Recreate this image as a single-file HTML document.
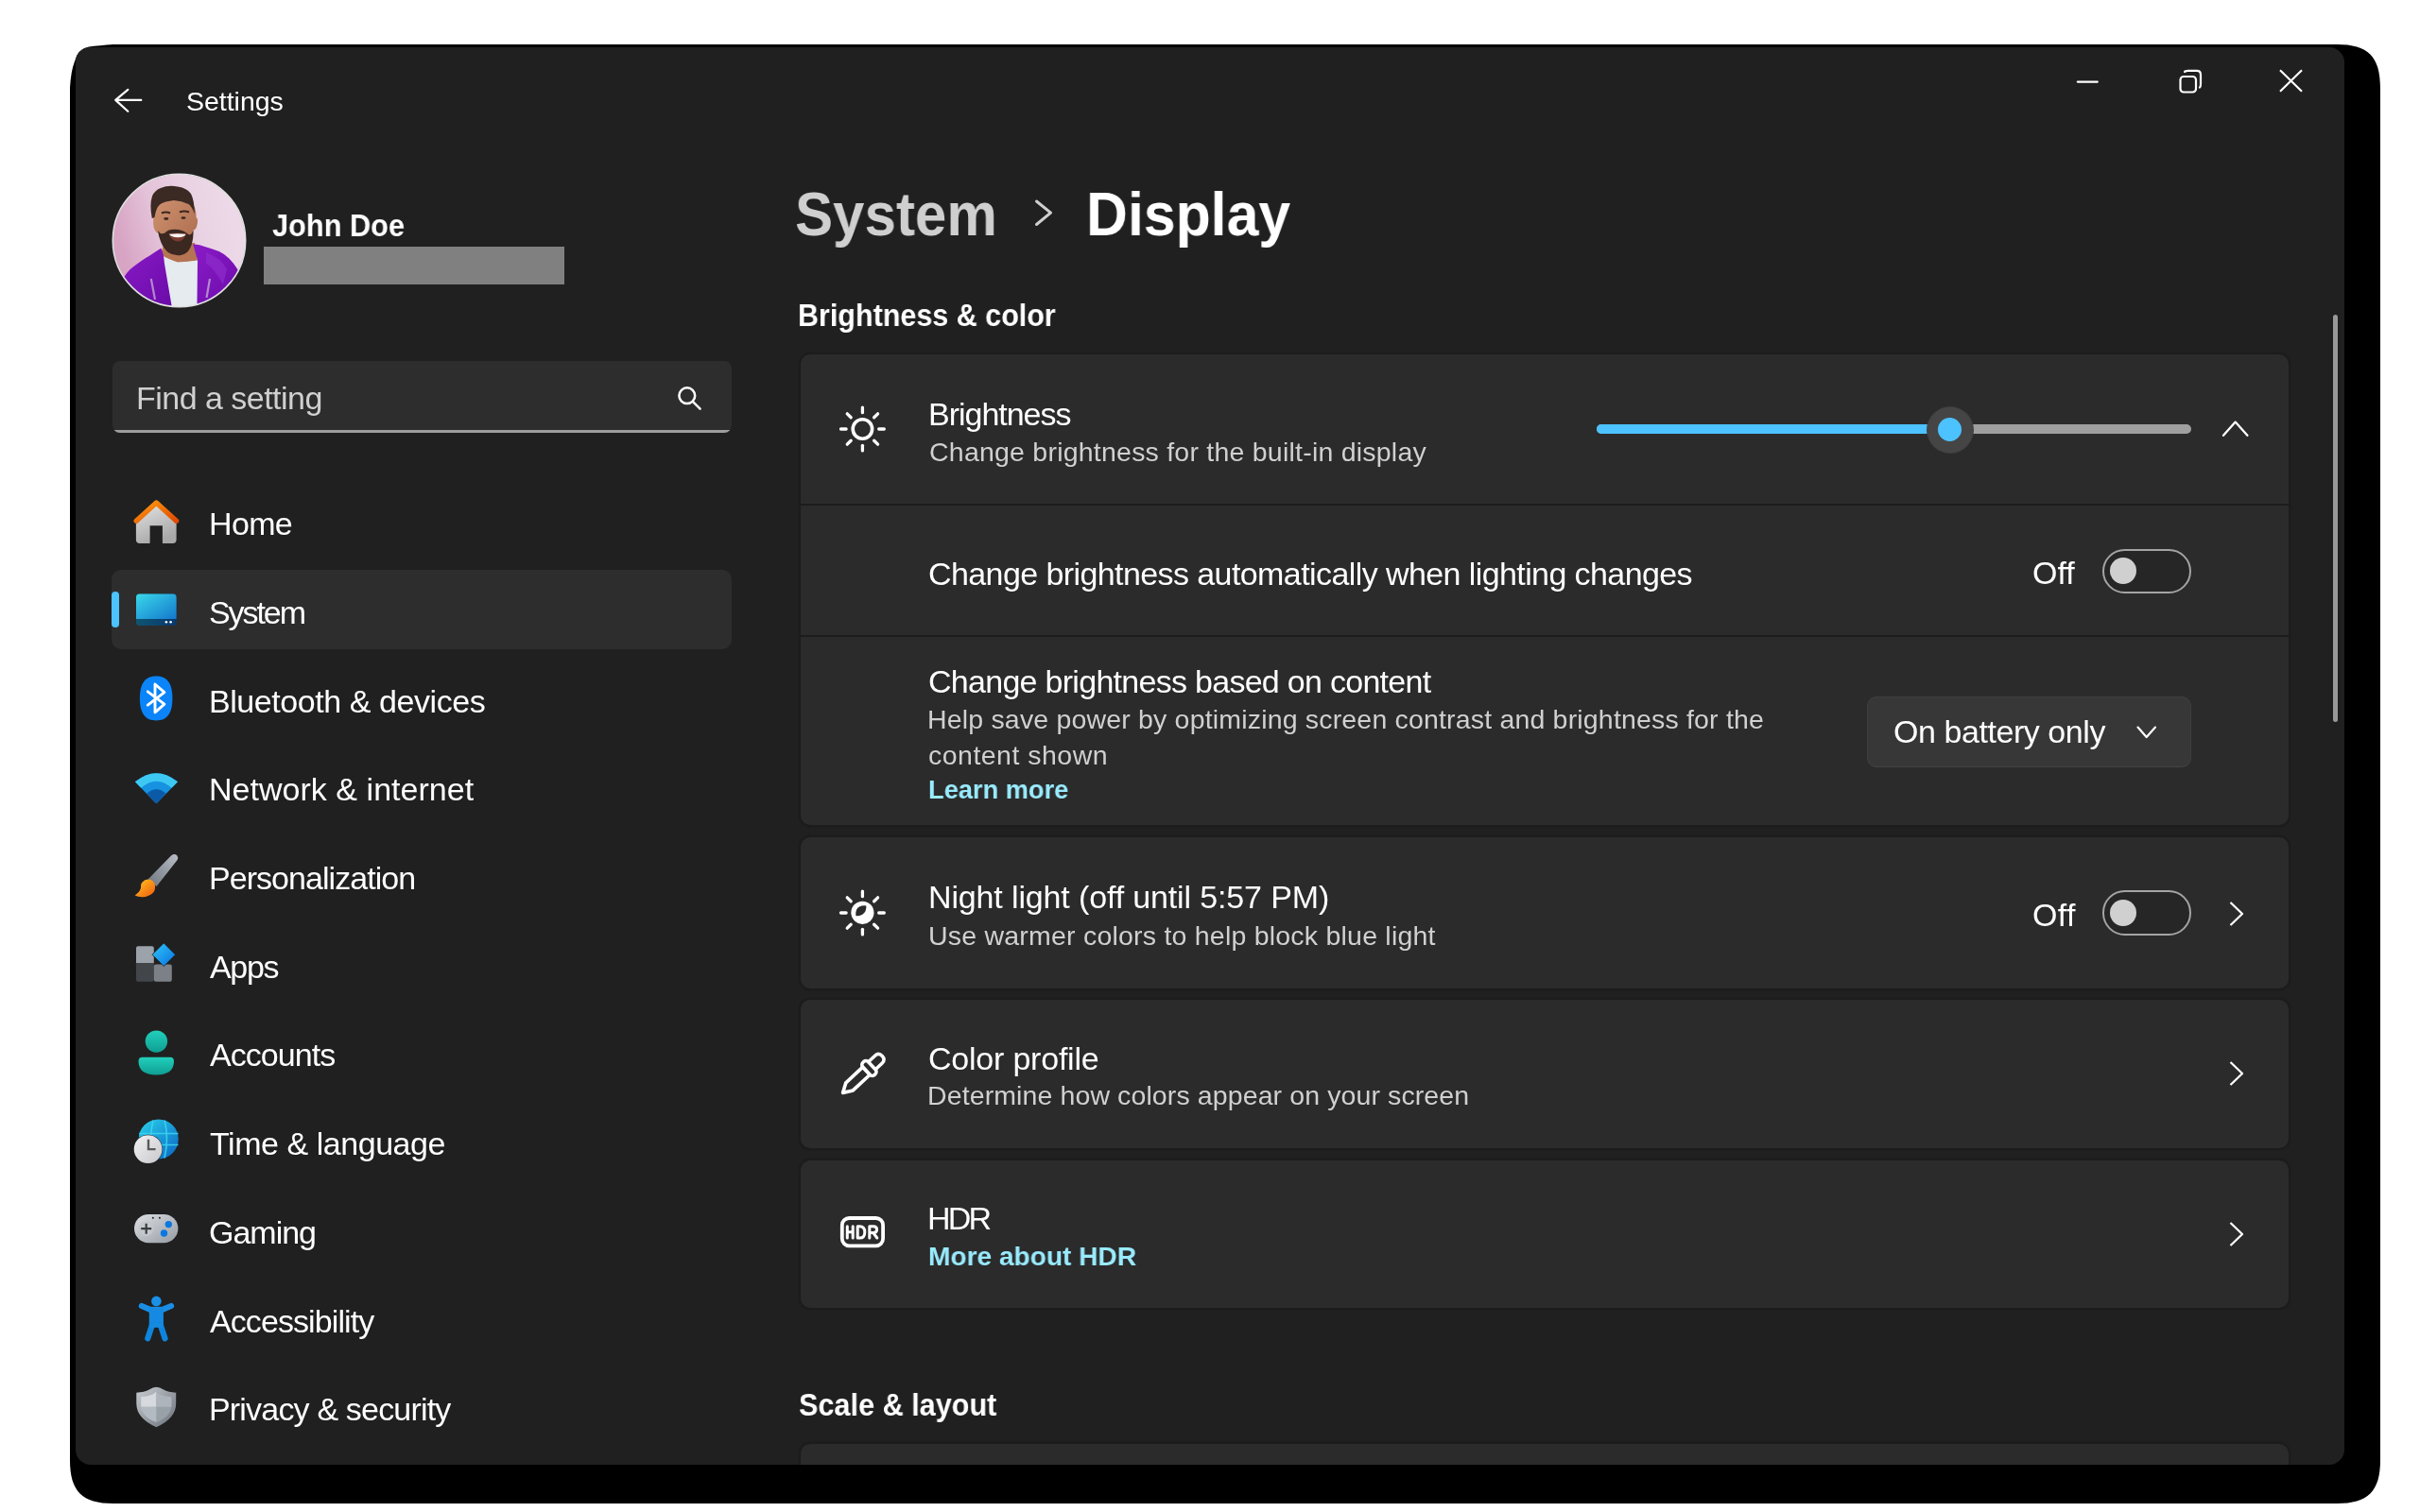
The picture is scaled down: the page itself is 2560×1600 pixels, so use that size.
<!DOCTYPE html><html><head><meta charset="utf-8"><title>Settings</title><style>
html,body{margin:0;padding:0;width:2560px;height:1600px;overflow:hidden;background:#ffffff}
.t{position:absolute;white-space:nowrap;line-height:1;font-family:"Liberation Sans",sans-serif;will-change:transform}
.abs{position:absolute}
</style></head><body>
<svg class="abs" style="left:0;top:0" width="2560" height="1600"><path d="M74 1545 L74 93 Q75 75 79 65 Q82 52 94 49.5 Q105 48 120 47 L2472 47 C2505.1 47 2518 59.9 2518 93 L2518 1545 C2518 1578.1 2505.1 1591 2472 1591 L120 1591 C86.9 1591 74 1578.1 74 1545 Z" fill="#000"/></svg>
<div class="abs" style="left:80px;top:50px;width:2400px;height:1500px;border-radius:15px 16px 16px 16px;background:#202020;overflow:hidden">
<div class="abs" style="left:-80px;top:-50px;width:2560px;height:1600px">
<svg class="abs" style="left:118px;top:183px" width="143" height="143" viewBox="0 0 143 143">
<defs><clipPath id="av"><circle cx="71.5" cy="71.5" r="70"/></clipPath>
<linearGradient id="avbg" x1="0" y1="0.3" x2="1" y2="0"><stop offset="0" stop-color="#d8a4c4"/><stop offset="0.28" stop-color="#e3c2d8"/><stop offset="0.6" stop-color="#ead4e4"/><stop offset="1" stop-color="#eedce9"/></linearGradient>
<linearGradient id="skin" x1="0" y1="0" x2="1" y2="1"><stop offset="0" stop-color="#cf9270"/><stop offset="1" stop-color="#a8694a"/></linearGradient>
<linearGradient id="hood" x1="0" y1="0" x2="1" y2="1"><stop offset="0" stop-color="#8a1cc8"/><stop offset="1" stop-color="#6a0aa8"/></linearGradient></defs>
<g clip-path="url(#av)">
<rect width="143" height="143" fill="url(#avbg)"/>
<path d="M55 76 L88 74 L91 93 L70 95 L52 87 Z" fill="#b57452"/>
<path d="M51.3 86 Q60 92 70.3 94.6 Q82 94 91 92.5 L91 143 H62 Z" fill="#e5ebef"/>
<path d="M10 116 Q16 104 23.7 98.8 Q34 91 39.6 88 Q47 83 52.3 79.8 Q55 84 56 96 L64 143 H4 Z" fill="url(#hood)"/>
<path d="M86.2 75.5 Q94 76 97.8 77.7 Q106 80 113.7 83 Q120 86 124.3 90.4 Q130 96 134 103 L140 143 H90.4 L91 92.5 Z" fill="url(#hood)"/>
<path d="M100 84 Q116 90 122 102 L118 118 Q108 100 100 96 Z" fill="#8e2ccc" opacity="0.7"/>
<path d="M41.8 112 L46 134 M104 112 L100.5 132" stroke="#c4a6d8" stroke-width="2.2" opacity="0.8"/>
<path d="M45 43.8 Q46 30 58 28 Q72 26 84 31 Q90 36 89.5 47 Q92 48 90.5 55 Q89.5 60 86.5 60.5 Q86 74 80 82 Q73 88 64 85 Q53 80 50 64 Q46 63 44.5 57 Q43.5 50 45 43.8 Z" fill="url(#skin)"/>
<path d="M49 60.7 Q51 76 59.7 84 Q66 88 72.4 87.2 Q80 86 83 79.8 Q87 72 86.4 60.5 Q84 68 80 64 Q74 59.5 66 59.8 Q59 60 56.5 63.5 Q52 66 49 60.7 Z" fill="#3a2821"/>
<path d="M60.5 64.5 Q70 62.5 79 64.5 Q76 72.5 70 72.5 Q63 72 60.5 64.5 Z" fill="#7a3a30"/>
<path d="M61 64.8 Q70 63.5 78.6 64.8 Q77.5 68 70 68.3 Q63 68 61 64.8 Z" fill="#f6f2ef"/>
<path d="M42.8 48 Q40 34 43 24.5 Q46 18 52 16 Q60 12.5 70 14.5 Q80 16 84 22 Q88 30 87.8 43.8 Q86 37 82 33.2 Q74 29.5 66 29 Q56 30 51.3 33.2 Q47 37 45.5 47 Z" fill="#3b2923"/>
<path d="M53 42.5 Q57.5 40.5 62 42.5 M72 41.5 Q77 39.5 82 41.5" stroke="#3b2620" stroke-width="2.2" fill="none"/>
<ellipse cx="57.8" cy="48.5" rx="2.6" ry="1.4" fill="#3e2a24"/><ellipse cx="76" cy="47.6" rx="2.6" ry="1.4" fill="#3e2a24"/>
</g>
<circle cx="71.5" cy="71.5" r="70.2" fill="none" stroke="#e0e0e0" stroke-width="1.6"/>
</svg>
<div class="abs" style="left:279px;top:261px;width:318px;height:40px;background:#808080"></div>
<div class="abs" style="left:118.5px;top:382px;width:655px;height:76px;border-radius:8px;background:#2d2d2d;overflow:hidden"><div class="abs" style="left:0;bottom:0;width:655px;height:3px;background:#9e9e9e"></div></div>
<div class="abs" style="left:118px;top:603px;width:656px;height:84px;border-radius:10px;background:#2d2d2d"></div>
<div class="abs" style="left:118px;top:626px;width:8px;height:38px;border-radius:4px;background:#4cc2ff"></div>
<div class="abs" style="left:846.5px;top:375px;width:1574.5px;height:498px;border-radius:10px;background:#2b2b2b;box-shadow:0 0 0 2.5px #1c1c1c"></div>
<div class="abs" style="left:846.5px;top:532.5px;width:1574.5px;height:2.5px;background:#1c1c1c"></div>
<div class="abs" style="left:846.5px;top:671.5px;width:1574.5px;height:2.5px;background:#1c1c1c"></div>
<div class="abs" style="left:846.5px;top:886px;width:1574.5px;height:159.5px;border-radius:10px;background:#2b2b2b;box-shadow:0 0 0 2.5px #1c1c1c"></div>
<div class="abs" style="left:846.5px;top:1058px;width:1574.5px;height:156.5px;border-radius:10px;background:#2b2b2b;box-shadow:0 0 0 2.5px #1c1c1c"></div>
<div class="abs" style="left:846.5px;top:1227.5px;width:1574.5px;height:156.5px;border-radius:10px;background:#2b2b2b;box-shadow:0 0 0 2.5px #1c1c1c"></div>
<div class="abs" style="left:846.5px;top:1528px;width:1574.5px;height:200px;border-radius:10px;background:#2b2b2b;box-shadow:0 0 0 2.5px #1c1c1c"></div>
<div class="abs" style="left:1689px;top:449px;width:629px;height:10px;border-radius:5px;background:#9f9f9f"></div>
<div class="abs" style="left:1689px;top:449px;width:380px;height:10px;border-radius:5px;background:#4cc2ff"></div>
<div class="abs" style="left:2038.5px;top:430.5px;width:48px;height:48px;border-radius:50%;background:#454545;box-shadow:0 0 0 1px #3e3e3e"></div>
<div class="abs" style="left:2050.1px;top:442.1px;width:25px;height:25px;border-radius:50%;background:#4cc2ff"></div>
<div class="abs" style="left:2224px;top:580.5px;width:94px;height:47.5px;box-sizing:border-box;border-radius:23.75px;border:2.8px solid #a4a4a4;background:#262626"></div>
<div class="abs" style="left:2231.6px;top:590.25px;width:28px;height:28px;border-radius:50%;background:#d0d0d0"></div>
<div class="abs" style="left:2224px;top:942px;width:94px;height:47.5px;box-sizing:border-box;border-radius:23.75px;border:2.8px solid #a4a4a4;background:#262626"></div>
<div class="abs" style="left:2231.6px;top:951.75px;width:28px;height:28px;border-radius:50%;background:#d0d0d0"></div>
<div class="abs" style="left:1975px;top:737px;width:342.5px;height:74.5px;box-sizing:border-box;border-radius:10px;background:#373737;border:1px solid #3f3f3f;border-bottom-color:#444"></div>
<div class="abs" style="left:2468px;top:332.5px;width:5px;height:431.5px;border-radius:2.5px;background:#999"></div>
<svg class="abs" style="left:1085px;top:205px" width="40" height="40"><path d="M11.5 8 L26.5 20.2 L11.5 32.5" stroke="#cfcfcf" stroke-width="3" fill="none" stroke-linecap="round" stroke-linejoin="round"/></svg>
<svg class="abs" style="left:2345px;top:440px" width="40" height="28"><path d="M7 20.8 L19.7 6.6 L32.4 20.8" stroke="#fff" stroke-width="2.3" fill="none" stroke-linecap="round" stroke-linejoin="round"/></svg>
<svg class="abs" style="left:2255px;top:762px" width="32" height="26"><path d="M6.5 7.6 L15.7 18 L25 7.6" stroke="#fff" stroke-width="2.2" fill="none" stroke-linecap="round" stroke-linejoin="round"/></svg>
<svg class="abs" style="left:2350px;top:948.5px" width="32" height="36"><path d="M9.5 6 L22 18 L9.5 30" stroke="#fff" stroke-width="2.3" fill="none" stroke-linejoin="round"/></svg>
<svg class="abs" style="left:2350px;top:1118px" width="32" height="36"><path d="M9.5 6 L22 18 L9.5 30" stroke="#fff" stroke-width="2.3" fill="none" stroke-linejoin="round"/></svg>
<svg class="abs" style="left:2350px;top:1287.7px" width="32" height="36"><path d="M9.5 6 L22 18 L9.5 30" stroke="#fff" stroke-width="2.3" fill="none" stroke-linejoin="round"/></svg>
<svg style="position:absolute;left:110px;top:84px" width="50" height="44" viewBox="0 0 50 44"><path d="M12.2 21.9 H39.3 M12.2 21.9 L25.3 10.8 M12.2 21.9 L25.3 33.8" stroke="#fff" stroke-width="2.2" fill="none" stroke-linecap="round" stroke-linejoin="round"/></svg>
<svg style="position:absolute;left:2180px;top:60px" width="280" height="50" viewBox="0 0 280 50"><path d="M17.8 26.6 H38.8" stroke="#fff" stroke-width="2.2" stroke-linecap="round"/><rect x="126.5" y="21" width="16.5" height="16.5" rx="3.5" stroke="#fff" stroke-width="2.2" fill="none"/><path d="M131 16 Q131.5 14.9 134.5 14.9 H144 Q148 14.9 148 19 V29 Q148 32 147 32.5" stroke="#fff" stroke-width="2.2" fill="none" stroke-linecap="round"/><path d="M232 14.2 L255 36.7 M255 14.2 L232 36.7" stroke="#fff" stroke-width="2.2"/></svg>
<svg style="position:absolute;left:705px;top:400px" width="50" height="45" viewBox="0 0 50 45"><circle cx="21.8" cy="18.7" r="8.4" stroke="#fff" stroke-width="2.5" fill="none"/><path d="M27.8 24.8 L35.6 32.6" stroke="#fff" stroke-width="2.5" stroke-linecap="round"/></svg>
<svg style="position:absolute;left:0;top:0" width="0" height="0"><defs>
<linearGradient id="gHome" x1="0" y1="0" x2="0.4" y2="1"><stop offset="0" stop-color="#e6e6e6"/><stop offset="1" stop-color="#a9a9a9"/></linearGradient>
<linearGradient id="gRoof" x1="0" y1="0" x2="1" y2="1"><stop offset="0" stop-color="#ff9a10"/><stop offset="1" stop-color="#e04a00"/></linearGradient>
<linearGradient id="gSys" x1="0" y1="0" x2="1" y2="1"><stop offset="0" stop-color="#3ad8ea"/><stop offset="1" stop-color="#1478cc"/></linearGradient>
<linearGradient id="gSysB" x1="0" y1="0" x2="1" y2="0"><stop offset="0" stop-color="#0f5570"/><stop offset="1" stop-color="#083870"/></linearGradient>
<linearGradient id="gWifi1" x1="0" y1="0" x2="0" y2="1"><stop offset="0" stop-color="#45d4fa"/><stop offset="1" stop-color="#36c6f2"/></linearGradient>
<linearGradient id="gBrushH" x1="1" y1="0" x2="0" y2="1"><stop offset="0" stop-color="#b8bec6"/><stop offset="1" stop-color="#6e757e"/></linearGradient>
<linearGradient id="gBrushT" x1="0" y1="0" x2="1" y2="1"><stop offset="0" stop-color="#ffc820"/><stop offset="1" stop-color="#f05a10"/></linearGradient>
<linearGradient id="gDia" x1="0" y1="0" x2="1" y2="1"><stop offset="0" stop-color="#30c8fa"/><stop offset="1" stop-color="#0a70e0"/></linearGradient>
<linearGradient id="gTeal" x1="0" y1="0" x2="0" y2="1"><stop offset="0" stop-color="#22d0bc"/><stop offset="1" stop-color="#0e9e92"/></linearGradient>
<linearGradient id="gGlobe" x1="0" y1="0" x2="1" y2="1"><stop offset="0" stop-color="#2ad2ea"/><stop offset="1" stop-color="#0a64c4"/></linearGradient>
<linearGradient id="gClock" x1="0" y1="0" x2="1" y2="1"><stop offset="0" stop-color="#f2f2f4"/><stop offset="1" stop-color="#c8c8cc"/></linearGradient>
<linearGradient id="gPad" x1="0" y1="0" x2="1" y2="1"><stop offset="0" stop-color="#dde0e4"/><stop offset="1" stop-color="#959ba3"/></linearGradient>
<linearGradient id="gAcc" x1="0" y1="0" x2="0" y2="1"><stop offset="0" stop-color="#1c9ae8"/><stop offset="1" stop-color="#0a78d8"/></linearGradient>
<linearGradient id="gShield" x1="0" y1="0" x2="1" y2="1"><stop offset="0" stop-color="#c8ccd2"/><stop offset="1" stop-color="#6c727a"/></linearGradient>
</defs></svg>
<svg style="position:absolute;left:136px;top:520px" width="60" height="60" viewBox="0 0 60 60"><path d="M7.9 31 L29.4 12 L50.6 31 V51 Q50.6 55 46.6 55 H35.9 V36.3 H22.6 V55 H11.9 Q7.9 55 7.9 51 Z" fill="url(#gHome)"/><path d="M8.2 31.3 L29.4 12 L50.6 31.3" stroke="url(#gRoof)" stroke-width="5.4" fill="none" stroke-linecap="round" stroke-linejoin="round"/></svg>
<svg style="position:absolute;left:136px;top:615px" width="60" height="60" viewBox="0 0 60 60"><rect x="8" y="13.5" width="42.6" height="33.5" rx="3.5" fill="url(#gSysB)"/><path d="M8 17 Q8 13.5 11.5 13.5 H47.1 Q50.6 13.5 50.6 17 V39.9 H8 Z" fill="url(#gSys)"/><circle cx="39.9" cy="43.3" r="1.3" fill="#fff"/><circle cx="44.6" cy="43.3" r="1.3" fill="#fff"/></svg>
<svg style="position:absolute;left:136px;top:708px" width="60" height="60" viewBox="0 0 60 60"><path d="M29.2 7.5 C40 7.5 46.4 14 46.4 31 C46.4 48 40 54.4 29.2 54.4 C18.4 54.4 11.9 48 11.9 31 C11.9 14 18.4 7.5 29.2 7.5 Z" fill="#0a84f8"/><path d="M20.3 23.8 L37.9 37.2 L28 45.8 V16 L37.9 24.6 L20.3 38.2" stroke="#fff" stroke-width="2.9" fill="none" stroke-linecap="round" stroke-linejoin="round"/></svg>
<svg style="position:absolute;left:136px;top:805px" width="60" height="60" viewBox="0 0 60 60"><path d="M6.9 22.3 Q29.4 4 52 22.3 L30.6 44.2 Q29.4 45.4 28.2 44.2 Z" fill="#1792e0"/><path d="M6.9 22.3 Q29.4 4 52 22.3 L45.6 28.8 Q29.4 14.5 13.2 28.8 Z" fill="#3cc8f2"/><path d="M19.3 34.6 Q29.4 25.8 39.5 34.6 L30.6 44.2 Q29.4 45.4 28.2 44.2 Z" fill="#0b5aa8"/></svg>
<svg style="position:absolute;left:136px;top:898px" width="60" height="60" viewBox="0 0 60 60"><path d="M20.6 32.5 L45 7.5 Q48.5 4.6 51.4 7.4 Q53.2 10 51.6 12 L29.6 40 Z" fill="url(#gBrushH)"/><path d="M14.3 35.7 Q17 32.5 20.6 32.5 Q25 32.5 27.2 36 Q29 40 27.4 44.8 Q25 49 18 51 Q11 52 6.7 49.6 Q9.5 47.5 11.5 45 Q13.5 42 13.1 38.5 Q13.3 36.8 14.3 35.7 Z" fill="url(#gBrushT)"/></svg>
<svg style="position:absolute;left:136px;top:990px" width="60" height="60" viewBox="0 0 60 60"><rect x="8" y="11.3" width="18.8" height="19" rx="2" fill="#9ca2aa"/><rect x="8" y="29.8" width="18.8" height="19" rx="2" fill="#42464a"/><rect x="26.8" y="30.5" width="19" height="18.3" rx="2" fill="#7c8188"/><rect x="7.8" y="29" width="19.2" height="2" fill="#42464a"/><path d="M37.3 7.9 L49.6 20.2 L37.3 32.5 L25 20.2 Z" fill="url(#gDia)" stroke="#1b1b1b" stroke-width="0.8" stroke-linejoin="round"/></svg>
<svg style="position:absolute;left:136px;top:1085px" width="60" height="60" viewBox="0 0 60 60"><circle cx="29.4" cy="17.1" r="11.7" fill="url(#gTeal)"/><path d="M14.5 33.7 H44 Q48 33.7 48 38 Q48 52.4 29.3 52.4 Q10.5 52.4 10.5 38 Q10.5 33.7 14.5 33.7 Z" fill="url(#gTeal)"/></svg>
<svg style="position:absolute;left:136px;top:1178px" width="60" height="60" viewBox="0 0 60 60"><circle cx="31.7" cy="27.4" r="21" fill="url(#gGlobe)"/><g stroke="#3ad4f0" stroke-width="1.6" fill="none" opacity="0.9"><path d="M11 21.5 H52.5 M11 33.5 H52.5"/><path d="M26 7.5 Q21 27 26 47.5 M38 7.5 Q43 27 38 47.5"/></g><circle cx="20.6" cy="38.1" r="15.4" fill="#1e1e1e"/><circle cx="20.6" cy="38.1" r="14.9" fill="url(#gClock)"/><path d="M21 27.8 V38.1 H28.6" stroke="#5a5a5a" stroke-width="2.4" fill="none"/></svg>
<svg style="position:absolute;left:136px;top:1272px" width="60" height="60" viewBox="0 0 60 60"><rect x="6" y="12.9" width="46.4" height="30.4" rx="15.2" fill="url(#gPad)"/><circle cx="18.7" cy="28.2" r="7.8" fill="#c4c8cd"/><path d="M13.2 28.2 H24.2 M18.7 22.7 V33.7" stroke="#3a3e42" stroke-width="2.2"/><circle cx="42.3" cy="23.6" r="3.7" fill="#0a78e0"/><circle cx="37.5" cy="33" r="3.7" fill="#0a78e0"/><circle cx="25.8" cy="16.7" r="1" fill="#222"/><circle cx="32.9" cy="16.7" r="1" fill="#222"/></svg>
<svg style="position:absolute;left:136px;top:1366px" width="60" height="60" viewBox="0 0 60 60"><circle cx="29.4" cy="10.9" r="5.3" fill="#1a90e6"/><path d="M13.9 16 L23 19.8 H35.8 L45 16" stroke="#1a8ee4" stroke-width="6.2" fill="none" stroke-linecap="round" stroke-linejoin="round"/><rect x="21.8" y="18" width="15.1" height="20" fill="#168ae2"/><path d="M25 36 L20.3 50.2 M33.8 36 L38.5 50.2" stroke="#0f84dc" stroke-width="6.2" fill="none" stroke-linecap="round"/><path d="M21.8 34 H36.9 L35 40 Q29.4 37.5 23.8 40 Z" fill="#148ae0"/></svg>
<svg style="position:absolute;left:136px;top:1459px" width="60" height="60" viewBox="0 0 60 60"><path d="M29.4 8.7 Q33 8.7 37 11.5 Q42 14.3 50.2 14.7 V26 Q50.2 42 29.4 51.2 Q8.3 42 8.3 26 V14.7 Q16.8 14.3 21.8 11.5 Q25.8 8.7 29.4 8.7 Z" fill="url(#gShield)"/><path d="M29.4 13.5 Q33 18 45.3 19.3 V29.5 Q44 41 29.4 46 Z" fill="#98a0a8"/><path d="M29.4 13.5 Q25.5 18 13.2 19.3 V29.8 H29.4 Z" fill="#d6dade"/><path d="M13.2 29.8 Q14.5 41 29.4 46 V29.8 Z" fill="#b4bac2"/><path d="M29.4 13.5 Q33 18 45.3 19.3 V29.8 H29.4 Z" fill="#aeb4bc"/></svg>
<svg style="position:absolute;left:882px;top:424px" width="60" height="60" viewBox="0 0 60 60"><path d="M30.40 12.70 L30.40 7.10" stroke="#fff" stroke-width="3.3" stroke-linecap="round"/><path d="M42.63 17.77 L46.59 13.81" stroke="#fff" stroke-width="3.3" stroke-linecap="round"/><path d="M47.70 30.00 L53.30 30.00" stroke="#fff" stroke-width="3.3" stroke-linecap="round"/><path d="M42.63 42.23 L46.59 46.19" stroke="#fff" stroke-width="3.3" stroke-linecap="round"/><path d="M30.40 47.30 L30.40 52.90" stroke="#fff" stroke-width="3.3" stroke-linecap="round"/><path d="M18.17 42.23 L14.21 46.19" stroke="#fff" stroke-width="3.3" stroke-linecap="round"/><path d="M13.10 30.00 L7.50 30.00" stroke="#fff" stroke-width="3.3" stroke-linecap="round"/><path d="M18.17 17.77 L14.21 13.81" stroke="#fff" stroke-width="3.3" stroke-linecap="round"/><circle cx="30.4" cy="30" r="10.2" stroke="#fff" stroke-width="3.6" fill="none"/></svg>
<svg style="position:absolute;left:882px;top:936px" width="60" height="60" viewBox="0 0 60 60"><path d="M30.40 12.70 L30.40 7.10" stroke="#fff" stroke-width="3.3" stroke-linecap="round"/><path d="M42.63 17.77 L46.59 13.81" stroke="#fff" stroke-width="3.3" stroke-linecap="round"/><path d="M47.70 30.00 L53.30 30.00" stroke="#fff" stroke-width="3.3" stroke-linecap="round"/><path d="M42.63 42.23 L46.59 46.19" stroke="#fff" stroke-width="3.3" stroke-linecap="round"/><path d="M30.40 47.30 L30.40 52.90" stroke="#fff" stroke-width="3.3" stroke-linecap="round"/><path d="M18.17 42.23 L14.21 46.19" stroke="#fff" stroke-width="3.3" stroke-linecap="round"/><path d="M13.10 30.00 L7.50 30.00" stroke="#fff" stroke-width="3.3" stroke-linecap="round"/><path d="M18.17 17.77 L14.21 13.81" stroke="#fff" stroke-width="3.3" stroke-linecap="round"/><circle cx="30.4" cy="29.8" r="12.1" fill="#fff"/><path d="M23.4 33 Q22.5 26 27 23.5 Q30 22 34.3 22.4 Q35 28 30.5 31.5 Q27 34 23.4 33 Z" fill="#2b2b2b"/></svg>
<svg style="position:absolute;left:882px;top:1105px" width="60" height="60" viewBox="0 0 60 60"><g transform="translate(8.5 52.4) rotate(-43)" stroke="#fff" stroke-width="3.6" fill="none" stroke-linejoin="round"><path d="M1.5 0 L11 -5.5 H35.5 V5.5 H11 Z"/><rect x="35.5" y="-9" width="8" height="18" rx="3.5"/><path d="M43.5 -5.5 H53 Q58.5 -5.5 58.5 0 Q58.5 5.5 53 5.5 H43.5"/></g></svg>
<svg style="position:absolute;left:882px;top:1274px" width="60" height="60" viewBox="0 0 60 60"><rect x="8.8" y="15" width="43.3" height="29.3" rx="7.5" stroke="#fff" stroke-width="3.8" fill="none"/><g stroke="#fff" stroke-width="3" fill="none" stroke-linecap="round" stroke-linejoin="round"><path d="M14.3 23.8 V36 M20.2 23.8 V36 M14.3 29.8 H20.2"/><path d="M25.2 23.8 V36 H27.3 Q32.8 36 32.8 29.9 Q32.8 23.8 27.3 23.8 Z"/><path d="M37.8 36 V23.8 H41.8 Q45.6 23.8 45.6 27.3 Q45.6 30.6 41.8 30.6 H37.8 M41.8 30.6 L45.8 36"/></g></svg>
<div class="t" style="left:197.00px;top:93.46px;font-size:28.5px;font-weight:400;color:#ffffff;letter-spacing:-0.018px">Settings</div>
<div class="t" style="left:288.00px;top:222.05px;font-size:33px;font-weight:700;color:#ffffff;transform:scaleX(0.9314);transform-origin:0 0">John Doe</div>
<div class="t" style="left:143.60px;top:403.90px;font-size:34px;font-weight:400;color:#d0d0d0;letter-spacing:-0.524px">Find a setting</div>
<div class="t" style="left:221.00px;top:537.20px;font-size:34px;font-weight:400;color:#ffffff;letter-spacing:-0.662px">Home</div>
<div class="t" style="left:221.00px;top:630.90px;font-size:34px;font-weight:400;color:#ffffff;letter-spacing:-2.067px">System</div>
<div class="t" style="left:220.80px;top:724.60px;font-size:34px;font-weight:400;color:#ffffff;letter-spacing:-0.429px">Bluetooth &amp; devices</div>
<div class="t" style="left:220.80px;top:818.30px;font-size:34px;font-weight:400;color:#ffffff;letter-spacing:0.028px">Network &amp; internet</div>
<div class="t" style="left:220.80px;top:912.00px;font-size:34px;font-weight:400;color:#ffffff;letter-spacing:-0.954px">Personalization</div>
<div class="t" style="left:221.50px;top:1005.70px;font-size:34px;font-weight:400;color:#ffffff;letter-spacing:-1.332px">Apps</div>
<div class="t" style="left:221.50px;top:1099.40px;font-size:34px;font-weight:400;color:#ffffff;letter-spacing:-0.950px">Accounts</div>
<div class="t" style="left:221.50px;top:1193.10px;font-size:34px;font-weight:400;color:#ffffff;letter-spacing:-0.455px">Time &amp; language</div>
<div class="t" style="left:221.20px;top:1286.80px;font-size:34px;font-weight:400;color:#ffffff;letter-spacing:-1.008px">Gaming</div>
<div class="t" style="left:221.60px;top:1380.50px;font-size:34px;font-weight:400;color:#ffffff;letter-spacing:-0.913px">Accessibility</div>
<div class="t" style="left:220.80px;top:1474.20px;font-size:34px;font-weight:400;color:#ffffff;letter-spacing:-0.816px">Privacy &amp; security</div>
<div class="t" style="left:841.08px;top:193.94px;font-size:65px;font-weight:700;color:#cfcfcf;transform:scaleX(0.9243);transform-origin:0 0">System</div>
<div class="t" style="left:1149.26px;top:193.94px;font-size:65px;font-weight:700;color:#ffffff;transform:scaleX(0.9350);transform-origin:0 0">Display</div>
<div class="t" style="left:844.15px;top:317.45px;font-size:33px;font-weight:700;color:#ffffff;transform:scaleX(0.9238);transform-origin:0 0">Brightness &amp; color</div>
<div class="t" style="left:981.80px;top:420.80px;font-size:34px;font-weight:400;color:#ffffff;letter-spacing:-1.015px">Brightness</div>
<div class="t" style="left:982.80px;top:464.06px;font-size:28.5px;font-weight:400;color:#d0d0d0;letter-spacing:0.226px">Change brightness for the built-in display</div>
<div class="t" style="left:981.90px;top:590.00px;font-size:34px;font-weight:400;color:#ffffff;letter-spacing:-0.588px">Change brightness automatically when lighting changes</div>
<div class="t" style="left:2150.20px;top:589.20px;font-size:34px;font-weight:400;color:#ffffff;letter-spacing:-0.039px">Off</div>
<div class="t" style="left:982.00px;top:703.70px;font-size:34px;font-weight:400;color:#ffffff;letter-spacing:-0.715px">Change brightness based on content</div>
<div class="t" style="left:981.00px;top:747.26px;font-size:28.5px;font-weight:400;color:#d0d0d0;letter-spacing:0.179px">Help save power by optimizing screen contrast and brightness for the</div>
<div class="t" style="left:982.00px;top:784.86px;font-size:28.5px;font-weight:400;color:#d0d0d0;letter-spacing:0.480px">content shown</div>
<div class="t" style="left:982.04px;top:821.16px;font-size:28.5px;font-weight:700;color:#99ebff;transform:scaleX(0.9559);transform-origin:0 0">Learn more</div>
<div class="t" style="left:2002.60px;top:757.20px;font-size:34px;font-weight:400;color:#ffffff;letter-spacing:-0.440px">On battery only</div>
<div class="t" style="left:981.80px;top:932.30px;font-size:34px;font-weight:400;color:#ffffff;letter-spacing:-0.138px">Night light (off until 5:57 PM)</div>
<div class="t" style="left:981.80px;top:975.56px;font-size:28.5px;font-weight:400;color:#d0d0d0;letter-spacing:0.220px">Use warmer colors to help block blue light</div>
<div class="t" style="left:2149.90px;top:951.10px;font-size:34px;font-weight:400;color:#ffffff;letter-spacing:0.311px">Off</div>
<div class="t" style="left:982.40px;top:1102.60px;font-size:34px;font-weight:400;color:#ffffff;letter-spacing:-0.216px">Color profile</div>
<div class="t" style="left:981.40px;top:1145.36px;font-size:28.5px;font-weight:400;color:#d0d0d0;letter-spacing:0.108px">Determine how colors appear on your screen</div>
<div class="t" style="left:981.40px;top:1272.40px;font-size:34px;font-weight:400;color:#ffffff;letter-spacing:-2.854px">HDR</div>
<div class="t" style="left:982.41px;top:1314.86px;font-size:28.5px;font-weight:700;color:#99ebff;transform:scaleX(0.9857);transform-origin:0 0">More about HDR</div>
<div class="t" style="left:844.90px;top:1470.25px;font-size:33px;font-weight:700;color:#ffffff;transform:scaleX(0.9278);transform-origin:0 0">Scale &amp; layout</div>
</div></div>
</body></html>
